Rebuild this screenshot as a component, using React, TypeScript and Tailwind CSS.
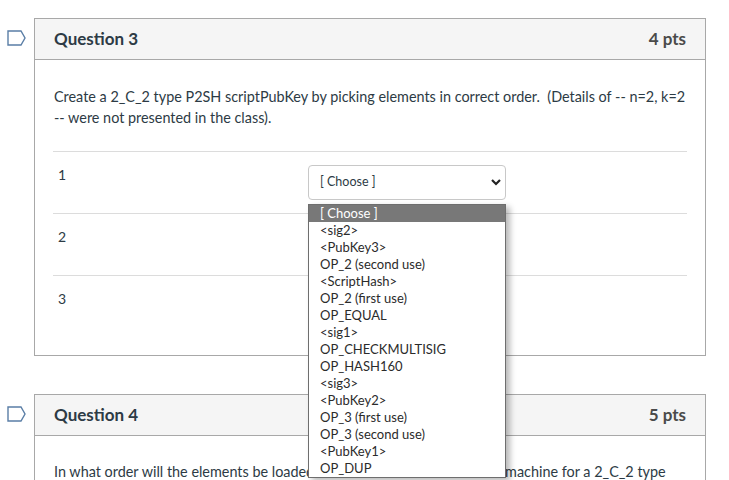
import React from "react";

const options = [
  "[ Choose ]",
  "<sig2>",
  "<PubKey3>",
  "OP_2 (second use)",
  "<ScriptHash>",
  "OP_2 (first use)",
  "OP_EQUAL",
  "<sig1>",
  "OP_CHECKMULTISIG",
  "OP_HASH160",
  "<sig3>",
  "<PubKey2>",
  "OP_3 (first use)",
  "OP_3 (second use)",
  "<PubKey1>",
  "OP_DUP",
];

function Flag() {
  return (
    <svg width="20" height="16" viewBox="0 0 20 16" className="block">
      <path d="M1 1 H14 L18 8 L14 15 H1 Z" fill="none" stroke="#5a7ea6" strokeWidth="1.4" strokeLinejoin="miter" />
    </svg>
  );
}

function Header({ title, pts }: { title: string; pts: string }) {
  return (
    <div className="h-[41px] bg-[#f5f5f5] border-b border-[#a8a8a8] flex items-center justify-between px-[19px]">
      <span className="text-[17px] font-bold">{title}</span>
      <span className="text-[17px] font-bold text-[#4a4a4a]">{pts}</span>
    </div>
  );
}

function Select({ open }: { open?: boolean }) {
  return (
    <div className="relative mt-[13px] w-[198px]">
      <div className="h-[35px] w-[198px] border border-[#c8c8c8] rounded-[4px] bg-white flex items-center justify-between pl-[11px] pr-[4px]">
        <span className="text-[12.5px]">[ Choose ]</span>
        <svg width="10" height="7" viewBox="0 0 10 7" className="block">
          <path d="M1 1 L5 5 L9 1" fill="none" stroke="#222" strokeWidth="2.2" />
        </svg>
      </div>
      {open && (
        <div className="absolute left-0 top-[39px] z-10 w-[198px] border border-[#6e6e6e] bg-white shadow-[4px_3px_6px_rgba(0,0,0,0.28)]">
          {options.map((o, i) => (
            <div
              key={o}
              className={
                i === 0
                  ? "h-[17px] leading-[17px] pl-[11px] text-[13px] bg-[#787878] text-white"
                  : "h-[17px] leading-[17px] pl-[11px] text-[13px] text-[#2b2b2b]"
              }
            >
              {o}
            </div>
          ))}
        </div>
      )}
    </div>
  );
}

function Row({ n, open }: { n: number; open?: boolean }) {
  return (
    <div className="h-[62px] border-t border-[#dcdcdc] grid grid-cols-[255px_1fr]">
      <div className="pl-[5px] pt-[12px] text-[14px] leading-[21px]">{n}</div>
      <div>
        <Select open={open} />
      </div>
    </div>
  );
}

export default function App() {
  return (
    <div className="h-[480px] overflow-hidden bg-white pt-[18px] font-['Lato',sans-serif] text-[#2d3b45]">
      <div className="flex">
        <div className="w-[34px] shrink-0 pl-[7px] pt-[12px]">
          <Flag />
        </div>
        <div className="w-[672px] border border-[#a8a8a8] bg-white">
          <Header title="Question 3" pts="4 pts" />
          <div className="pt-[26px] px-[18px] pb-[18px]">
            <p className="text-[14.4px] leading-[21px] pl-[1px]">
              Create a 2_C_2 type P2SH scriptPubKey by picking elements in correct order.&nbsp; (Details of -- n=2, k=2 -- were not presented in the class).
            </p>
            <div className="mt-[23px]">
              <Row n={1} open />
              <Row n={2} />
              <Row n={3} />
            </div>
          </div>
        </div>
      </div>
      <div className="flex mt-[38px]">
        <div className="w-[34px] shrink-0 pl-[7px] pt-[12px]">
          <Flag />
        </div>
        <div className="w-[672px] border border-[#a8a8a8] bg-white">
          <Header title="Question 4" pts="5 pts" />
          <div className="pt-[25px] px-[18px] pb-[18px]">
            <p className="text-[14.4px] leading-[21px] pl-[1px]">
              In what order will the elements be loaded on the stack of the execution machine for a 2_C_2 type P2SH scriptPubKey?
            </p>
          </div>
        </div>
      </div>
    </div>
  );
}
